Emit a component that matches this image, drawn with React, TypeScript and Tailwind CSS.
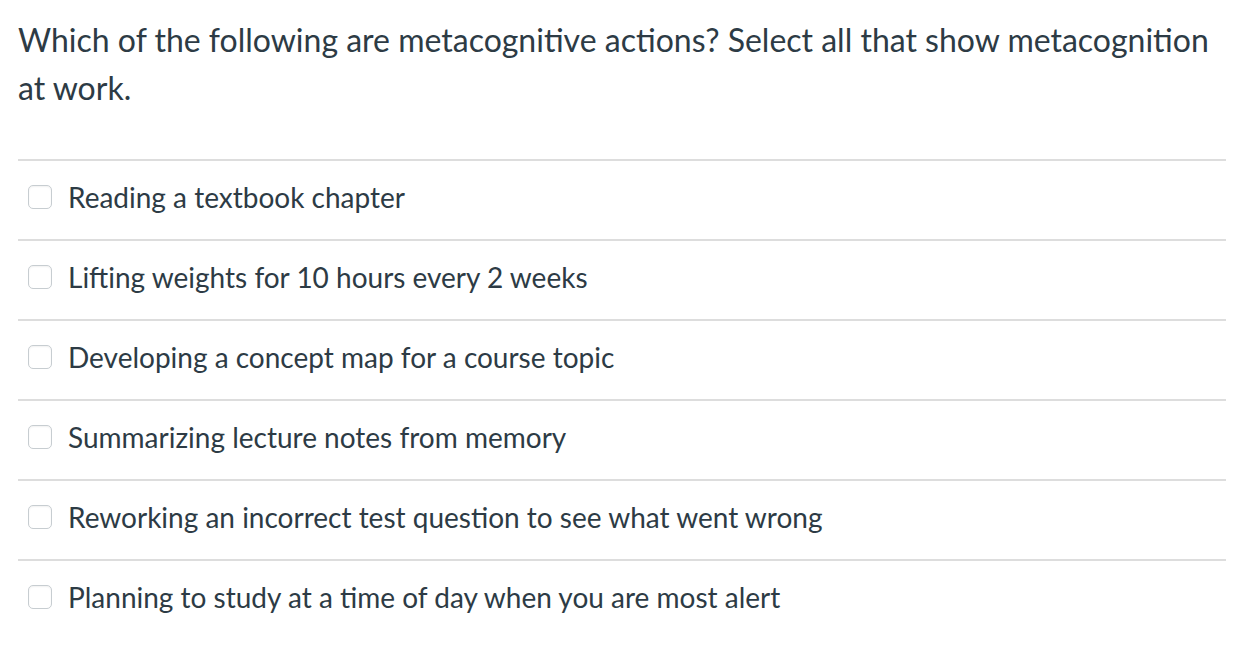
import React from "react";

const answers = [
  "Reading a textbook chapter",
  "Lifting weights for 10 hours every 2 weeks",
  "Developing a concept map for a course topic",
  "Summarizing lecture notes from memory",
  "Reworking an incorrect test question to see what went wrong",
  "Planning to study at a time of day when you are most alert",
];

export default function App() {
  return (
    <div className="w-[1256px] h-[660px] bg-white text-[#2d3b45] overflow-hidden" style={{ fontFamily: "Lato, 'Noto Sans', sans-serif" }}>
      <div className="pl-[18px] pr-[30px]">
        <p className="pt-[16px] pr-[12px] text-[32px] leading-[48px]">
          Which of the following are metacognitive actions? Select all that show metacognition at work.
        </p>
        <div className="mt-[47px]">
          {answers.map((a) => (
            <div key={a} className="border-t-2 border-[#dddddd] h-[80px] flex items-center pl-[10px] pb-[6px]">
              <span className="w-[24px] h-[24px] rounded-[5px] border border-[#c7cdd1] bg-white shadow-[inset_0_1px_2px_rgba(0,0,0,0.06)] shrink-0" />
              <span className="ml-[16px] text-[28px]">{a}</span>
            </div>
          ))}
        </div>
      </div>
    </div>
  );
}
